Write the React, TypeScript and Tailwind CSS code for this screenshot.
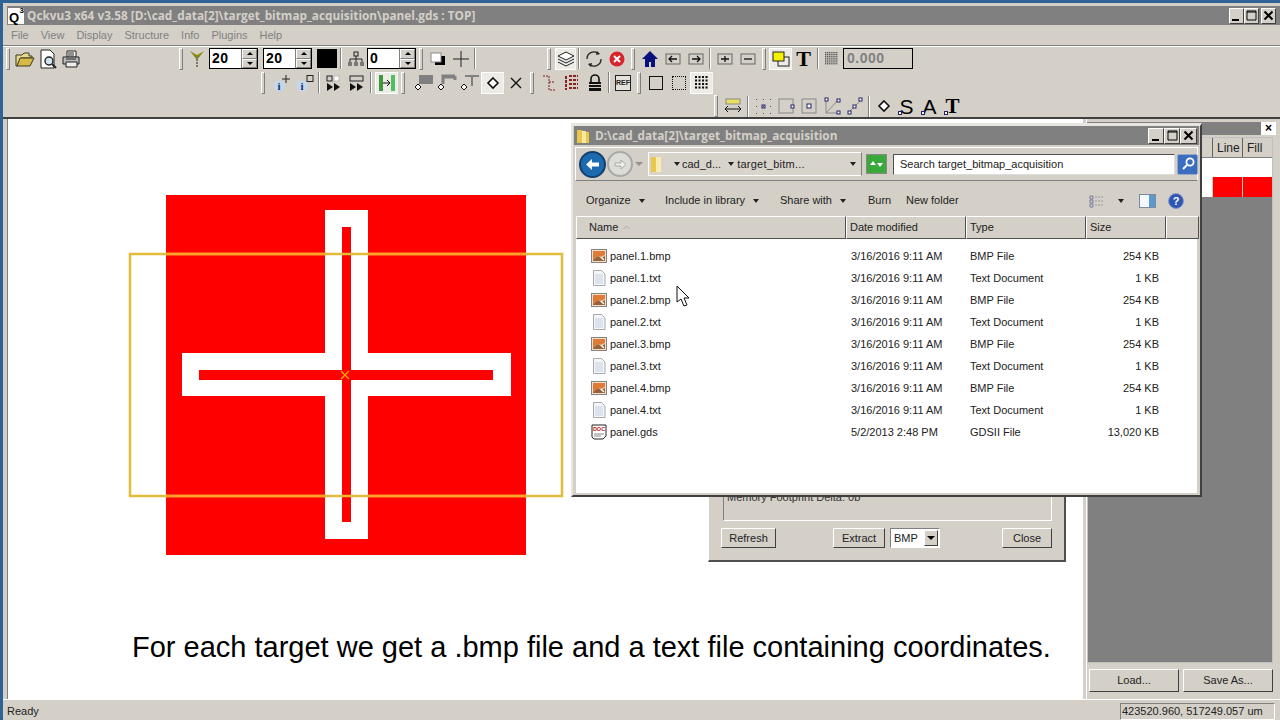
import React from "react";

const S = ({ w = 20, h = 20, children }: { w?: number; h?: number; children: React.ReactNode }) => (
  <svg width={w} height={h} viewBox={`0 0 ${w} ${h}`} className="block">{children}</svg>
);

const Grip = () => (
  <div className="h-[22px] w-[4px] shrink-0 border-l border-t border-white border-r border-b border-r-[#808080] border-b-[#808080] mx-[3px]" />
);
const Sep = () => <div className="h-[21px] w-[2px] shrink-0 border-l border-[#808080] bg-white mx-[2px]" />;
const B = ({ children, on = false, w = 23 }: { children?: React.ReactNode; on?: boolean; w?: number }) => (
  <div className={`h-[22px] shrink-0 flex items-center justify-center ${on ? "bg-[#ecebe6] border border-white border-r-[#f4f4f0]" : ""}`} style={{ width: w }}>{children}</div>
);
const Gap = ({ w }: { w: number }) => <div className="shrink-0" style={{ width: w }} />;

const Spin = ({ v, w = 49 }: { v: string; w?: number }) => (
  <div className="flex h-[21px] border border-black bg-white shrink-0" style={{ width: w }}>
    <div className="flex-1 pl-[2px] text-[14px] leading-[19px] font-bold text-black tracking-[0.5px]">{v}</div>
    <div className="w-[16px] flex flex-col bg-[#d4d0c8] border-l border-[#808080]">
      {[0, 1].map((i) => (
        <div key={i} className="flex-1 flex items-center justify-center border border-white border-r-[#808080] border-b-[#808080]">
          <div className={`w-0 h-0 border-l-[3px] border-r-[3px] border-transparent ${i === 0 ? "border-b-[3px] border-b-black" : "border-t-[3px] border-t-black"}`} />
        </div>
      ))}
    </div>
  </div>
);

const Folder = () => (
  <S w={20} h={18}><path d="M1 5h6l2-2h5v3h3v2H6L2 16H1z" fill="#e8d890" stroke="#3a3a20" /><path d="M5 8h14l-4 8H2z" fill="#d8b848" stroke="#3a3a20" /></S>
);
const Preview = () => (
  <S w={18} h={20}><path d="M2 1h9l4 4v14H2z" fill="#fff" stroke="#222" /><circle cx="10" cy="12" r="4" fill="#cfe4f0" stroke="#222" strokeWidth="1.4" /><path d="M13 15l4 4" stroke="#222" strokeWidth="2" /></S>
);
const Printer = () => (
  <S w={20} h={18}><path d="M6 1h9v6H6z" fill="#fff" stroke="#222" /><path d="M2 7h16v7H2z" fill="#bbb" stroke="#222" /><path d="M5 12h11v5H5z" fill="#eee" stroke="#222" /><path d="M5 9h10M7 3h6M7 5h6" stroke="#222" /></S>
);
const Funnel = () => (
  <S w={14} h={18}><path d="M0 1l7 9 7-9-7 4z" fill="#8a8a10" /><path d="M7 6v11" stroke="#776" strokeWidth="2" strokeDasharray="2 1" /></S>
);
const Tree = () => (
  <S w={16} h={16}><rect x="6" y="1" width="4" height="4" fill="none" stroke="#222" /><path d="M8 5v3M2 8h12M2 8v3M8 8v3M14 8v3" stroke="#222" fill="none" /><path d="M1 11v4M3 11v4M7 11v4M9 11v4M13 11v4M15 11v4" stroke="#222" /></S>
);
const Info = ({ plus = false }: { plus?: boolean }) => (
  <S w={20} h={18}>
    <circle cx="7" cy="12" r="5.5" fill="#c4d8ec" />
    <text x="7" y="16" textAnchor="middle" fontSize="11" fontWeight="bold" fill="#14306a" fontFamily="Liberation Serif, serif">i</text>
    {plus ? <path d="M14 1v8M10 5h8" stroke="#222" /> : <rect x="12" y="1.5" width="6" height="6" fill="none" stroke="#222" />}
  </S>
);
const Ff = ({ wide = false }: { wide?: boolean }) => (
  <S w={16} h={18}>
    {wide ? <rect x="1" y="2" width="13" height="5" fill="none" stroke="#222" /> : <><rect x="1" y="2" width="5" height="5" fill="none" stroke="#222" /><rect x="8" y="2" width="5" height="5" fill="#fff" stroke="#bbb" /></>}
    <path d="M1 9l6 4-6 4zM8 9l6 4-6 4z" fill="#111" />
  </S>
);
const Green = () => (
  <S w={18} h={18}><rect x="1" y="1" width="4" height="16" fill="#3f9a3f" /><rect x="13" y="1" width="4" height="16" fill="#4fbf5f" /><path d="M5 9h7M9 6l3 3-3 3" stroke="#111" fill="none" /></S>
);
const EditA = ({ k }: { k: number }) => (
  <S w={20} h={18}>
    {k === 0 && <rect x="5" y="1" width="14" height="9" fill="#808080" />}
    {k === 1 && <path d="M6 10V2h12M18 2v4M6 3h12" stroke="#808080" strokeWidth="3" fill="none" />}
    {k === 2 && <path d="M5 2h14M12 2v10" stroke="#808080" strokeWidth="2" fill="none" />}
    <path d="M4 10l3 3-3 3-3-3z" fill="#fff" stroke="#111" />
  </S>
);
const Diamond = ({ s = 5 }: { s?: number }) => (
  <S w={14} h={14}><path d={`M7 ${7 - s}L${7 + s} 7 7 ${7 + s} ${7 - s} 7z`} fill="#fff" stroke="#111" strokeWidth="1.6" /></S>
);
const Xx = () => <S w={12} h={12}><path d="M1 1l10 10M11 1L1 11" stroke="#111" strokeWidth="1.4" /></S>;
const Hier = ({ c, k }: { c: string; k: number }) => (
  <S w={16} h={18}>
    {k === 0 ? <path d="M2 2h6v14h6M8 8h6" stroke={c} fill="none" strokeDasharray="2 1" /> : <path d="M2 2v14M5 2h9M5 6h9M5 10h9M5 14h9" stroke={c} strokeWidth="2" strokeDasharray="3 1" fill="none" />}
  </S>
);
const Lock = () => (
  <S w={14} h={18}><path d="M3 8V5a4 4 0 018 0v3" fill="none" stroke="#111" strokeWidth="1.6" /><path d="M1 8h12v2H1zM1 11h12v2H1zM1 14h12v3H1z" fill="#111" /></S>
);
const Home = () => (
  <S w={18} h={18}><path d="M9 1L1 9h3v8h4v-5h2v5h4V9h3z" fill="#08107c" /></S>
);
const Boxed = ({ d }: { d: string }) => (
  <S w={16} h={12}><rect x="1" y="1" width="14" height="10" fill="none" stroke="#666" /><path d={d} stroke="#111" strokeWidth="1.3" fill="none" /></S>
);
const Dots = ({ n = 6, size = 14, c = "#111" }: { n?: number; size?: number; c?: string }) => {
  const step = size / n;
  const items = [];
  for (let i = 0; i < n; i++) for (let j = 0; j < n; j++) items.push(<rect key={`${i}${j}`} x={i * step} y={j * step} width={step / 2 + 0.3} height={step / 2 + 0.3} fill={c} />);
  return <S w={size} h={size}>{items}</S>;
};
const Pts = ({ k }: { k: number }) => (
  <S w={18} h={18}>
    {k === 0 && <>{[2, 9, 16].flatMap((x) => [2, 9, 16].map((y) => <rect key={`${x}${y}`} x={x} y={y} width="1" height="1" fill="#555" />))}<rect x="8" y="8" width="3" height="3" fill="none" stroke="#226" /></>}
    {k === 1 && <><rect x="2" y="2" width="14" height="14" fill="none" stroke="#888" /><rect x="14" y="8" width="3" height="3" fill="#fff" stroke="#226" /></>}
    {k === 2 && <><rect x="2" y="2" width="14" height="14" fill="none" stroke="#888" /><rect x="7" y="7" width="4" height="4" fill="#fff" stroke="#226" /></>}
    {k === 3 && <path d="M3 2v14l13 0M3 16L15 3" stroke="#888" fill="none" />}
    {k === 3 && <><rect x="2" y="1" width="3" height="3" fill="#fff" stroke="#226" /><rect x="14" y="2" width="3" height="3" fill="#fff" stroke="#226" /><rect x="14" y="14" width="3" height="3" fill="#fff" stroke="#226" /></>}
    {k === 4 && <><path d="M3 15L15 3" stroke="#888" /><rect x="13" y="1" width="3" height="3" fill="#fff" stroke="#226" /><rect x="7" y="8" width="3" height="3" fill="#fff" stroke="#226" /><rect x="2" y="14" width="3" height="3" fill="#fff" stroke="#226" /></>}
  </S>
);
const Glyph = ({ t, serif = false }: { t: string; serif?: boolean }) => (
  <div className={`relative w-[20px] h-[20px] flex items-center justify-center text-[21px] leading-none text-black ${serif ? "font-['Liberation_Serif',serif] font-bold" : "font-['Liberation_Sans',sans-serif]"}`}>
    {t}
    <div className="absolute left-[1px] bottom-[1px] w-[4px] h-[4px] border border-[#226] bg-white" />
  </div>
);

const Bmp = () => (
  <S w={16} h={16}><rect x="0.5" y="1.5" width="15" height="13" fill="#f0e0d0" stroke="#8a8078" /><path d="M2 3h12v4l-4 2-3-1-5 4z" fill="#e07a38" /><path d="M2 12l5-4 3 2 4-2v5H2z" fill="#9a6038" /><path d="M10 9l3 3" stroke="#fff" strokeWidth="1.5" /></S>
);
const Txt = () => (
  <S w={16} h={16}><path d="M2.5 0.5h8l3.5 3.5v11.5H2.5z" fill="#f4f6fa" stroke="#a8a8a8" /><path d="M4 5h8M4 7h8M4 9h8M4 11h8M4 13h8" stroke="#c6d0e0" /></S>
);
const Doc = () => (
  <S w={16} h={16}><path d="M1 1h14v11l-3 3H3l-2-2z" fill="#fff" stroke="#222" /><text x="8" y="7" textAnchor="middle" fontSize="5.5" fontWeight="bold" fill="#b02020" fontFamily="Liberation Sans, sans-serif">DOC</text><path d="M3 10h10M3 12h7" stroke="#888" /></S>
);

const files: [string, string, string, string, string][] = [
  ["bmp", "panel.1.bmp", "3/16/2016 9:11 AM", "BMP File", "254 KB"],
  ["txt", "panel.1.txt", "3/16/2016 9:11 AM", "Text Document", "1 KB"],
  ["bmp", "panel.2.bmp", "3/16/2016 9:11 AM", "BMP File", "254 KB"],
  ["txt", "panel.2.txt", "3/16/2016 9:11 AM", "Text Document", "1 KB"],
  ["bmp", "panel.3.bmp", "3/16/2016 9:11 AM", "BMP File", "254 KB"],
  ["txt", "panel.3.txt", "3/16/2016 9:11 AM", "Text Document", "1 KB"],
  ["bmp", "panel.4.bmp", "3/16/2016 9:11 AM", "BMP File", "254 KB"],
  ["txt", "panel.4.txt", "3/16/2016 9:11 AM", "Text Document", "1 KB"],
  ["doc", "panel.gds", "5/2/2013 2:48 PM", "GDSII File", "13,020 KB"],
];

const WinBtn = ({ k, w = 17 }: { k: number; w?: number }) => (
  <div className="h-[16px] flex items-center justify-center bg-[#d4d0c8] border border-white border-r-[#404040] border-b-[#404040]" style={{ width: w }}>
    <S w={11} h={11}>
      {k === 0 && <path d="M1 9h7v2H1z" fill="#000" />}
      {k === 1 && <path d="M1 1h9v9H1zM1 2h9" fill="none" stroke="#000" />}
      {k === 2 && <path d="M1.5 1.5l8 8M9.5 1.5l-8 8" stroke="#000" strokeWidth="2" />}
    </S>
  </div>
);

const Btn = ({ t, w, h = 20 }: { t: string; w: number; h?: number }) => (
  <div className="flex items-center justify-center bg-[#d4d0c8] border border-white border-r-[#404040] border-b-[#404040] text-[11px] text-[#222] shrink-0" style={{ width: w, height: h }}>{t}</div>
);

const Caret = () => <div className="w-0 h-0 border-l-[3.5px] border-r-[3.5px] border-t-[4px] border-transparent border-t-[#222]" />;

const Cmd = ({ t, w, caret = true }: { t: string; w: number; caret?: boolean }) => (
  <div className="flex items-center shrink-0 gap-[8px]" style={{ width: w }}>
    <span>{t}</span>
    {caret && <Caret />}
  </div>
);

const Hdr = ({ t, w }: { t: string; w: number }) => (
  <div className="h-[23px] flex items-center pl-[3px] border-l border-t border-white border-r border-b border-r-[#505050] border-b-[#505050] shrink-0" style={{ width: w }}>{t}</div>
);

export default function App() {
  return (
    <div className="relative w-[1280px] h-[720px] overflow-hidden bg-[#d4d0c8] flex flex-col font-['Liberation_Sans',sans-serif] text-[11px] text-[#222] border-l-[3px] border-t-[3px] border-[#2f6396]">
      {/* Title */}
      <div className="mt-[3px] ml-[4px] h-[19px] shrink-0 flex items-center bg-[#808080]">
        <div className="ml-[1px] w-[16px] h-[16px] bg-white flex items-end justify-start shrink-0 relative">
          <span className="text-[13px] leading-[13px] font-bold text-black pl-[1px]">Q</span>
          <span className="absolute right-0 top-[-1px] text-[8px] leading-[8px] font-bold text-black">3</span>
        </div>
        <span className="ml-[3px] font-['Open_Sans',sans-serif] font-bold text-[11.8px] text-[#d4d0c8] whitespace-nowrap">Qckvu3 x64 v3.58 [D:\cad_data[2]\target_bitmap_acquisition\panel.gds : TOP]</span>
        <div className="ml-auto mr-[4px] flex">
          <WinBtn k={0} w={15} /><WinBtn k={1} w={15} /><div className="w-[2px]" /><WinBtn k={2} w={15} />
        </div>
      </div>
      {/* Menu */}
      <div className="h-[21px] shrink-0 flex items-center pl-[8px] gap-[12px] text-[#808080] text-[11px] border-b border-[#808080]">
        {["File", "View", "Display", "Structure", "Info", "Plugins", "Help"].map((m) => <span key={m}>{m}</span>)}
      </div>
      {/* Toolbar rows */}
      <div className="h-[24px] shrink-0 flex items-center border-t border-white">
        <Grip />
        <B><Folder /></B><B><Preview /></B><B><Printer /></B>
        <Gap w={94} />
        <Grip />
        <Gap w={1} />
        <B w={20}><Funnel /></B>
        <Gap w={2} />
        <Spin v="20" /><Gap w={5} /><Spin v="20" /><Gap w={5} />
        <div className="w-[20px] h-[19px] bg-black shrink-0" />
        <Gap w={1} /><Sep /><Gap w={1} />
        <B w={22}><Tree /></B>
        <Spin v="0" />
        <Grip />
        <B>
          <S w={16} h={14}><rect x="5" y="4" width="10" height="9" fill="#000" /><rect x="1" y="1" width="10" height="9" fill="#fff" stroke="#888" /></S>
        </B>
        <B><S w={18} h={18}><path d="M9 1v16M1 9h16" stroke="#222" /></S></B>
        <Sep />
        <Gap w={66} />
        <Grip />
        <Gap w={1} />
        <B on w={21}>
          <S w={18} h={18}><path d="M9 2l8 4-8 4-8-4z" fill="#fff" stroke="#222" /><path d="M1 9l8 4 8-4M1 12l8 4 8-4" fill="none" stroke="#222" /></S>
        </B>
        <Sep />
        <B><S w={18} h={18}><path d="M2 9a7 7 0 0112-5M16 9a7 7 0 01-12 5" fill="none" stroke="#222" strokeWidth="1.3" /><path d="M12 1l3 3-4 1zM6 17l-3-3 4-1z" fill="#222" /></S></B>
        <B><S w={16} h={16}><circle cx="8" cy="8" r="7.5" fill="#d8242c" /><path d="M5 5l6 6M11 5l-6 6" stroke="#fff" strokeWidth="2" /></S></B>
        <Grip />
        <B><Home /></B>
        <B><Boxed d="M12 6H4M7 3L4 6l3 3" /></B>
        <B><Boxed d="M4 6h8M9 3l3 3-3 3" /></B>
        <Sep />
        <B><Boxed d="M4 6h8M8 3v6" /></B>
        <B><Boxed d="M4 6h8" /></B>
        <Grip />
        <B on><S w={18} h={16}><rect x="6" y="6" width="11" height="9" fill="none" stroke="#222" /><rect x="1" y="1" width="11" height="9" fill="#f4f000" stroke="#222" /></S></B>
        <B><span className="font-['Liberation_Serif',serif] font-bold text-[22px] leading-none text-black">T</span></B>
        <Sep />
        <B w={20}><Dots n={7} size={13} c="#555" /></B>
        <Gap w={2} />
        <div className="w-[70px] h-[21px] border border-black text-[14px] font-bold text-[#808080] pl-[3px] leading-[19px] shrink-0 tracking-[0.5px]">0.000</div>
      </div>
      <div className="h-[25px] shrink-0 flex items-center pl-[255px]">
        <Grip /><Gap w={2} />
        <B><Info plus /></B><B><Info /></B><Sep /><B><Ff /></B><B><Ff wide /></B><Sep />
        <Gap w={1} />
        <B on><Green /></B>
        <Grip /><Gap w={4} />
        <B><EditA k={0} /></B><B><EditA k={1} /></B><B><EditA k={2} /></B>
        <B on><Diamond /></B>
        <B><Xx /></B>
        <Grip />
        <B><Hier c="#7a1c1c" k={0} /></B><B><Hier c="#8a2222" k={1} /></B><B><Lock /></B><Sep />
        <B w={22}><div className="w-[16px] h-[16px] border border-[#222] text-[7px] leading-[14px] font-bold text-center bg-[#e4e2dc]">REF</div></B>
        <Grip />
        <B><div className="w-[14px] h-[14px] border-[1.5px] border-[#111]" /></B>
        <B><div className="w-[14px] h-[14px] border-[1.5px] border-dotted border-[#111]" /></B>
        <B on><Dots n={4} size={14} /></B>
      </div>
      <div className="h-[24px] shrink-0 flex items-center pl-[708px] border-b-2 border-[#404040]">
        <Grip />
        <B w={24}><S w={18} h={16}><rect x="2" y="1" width="14" height="5" fill="#e8e060" stroke="#888" /><path d="M1 11h16M1 11l3-3M1 11l3 3M17 11l-3-3M17 11l-3 3" stroke="#111" fill="none" /></S></B>
        <Sep />
        <B><Pts k={0} /></B><B><Pts k={1} /></B><B><Pts k={2} /></B><B><Pts k={3} /></B><B><Pts k={4} /></B>
        <Sep />
        <B><Diamond s={5} /></B>
        <B><Glyph t="S" /></B><B><Glyph t="A" /></B><B><Glyph t="T" serif /></B>
      </div>

      {/* Body */}
      <div className="flex-1 flex min-h-0 pl-[4px]">
        <div className="relative w-[1076px] bg-white shrink-0 border-l border-[#808080]">
          <svg width="1075" height="580" viewBox="8 119 1075 580" className="block">
            <rect x="166" y="195" width="360" height="360" fill="#ff0000" />
            <rect x="325" y="210" width="43" height="329" fill="#fff" />
            <rect x="182" y="353" width="329" height="43" fill="#fff" />
            <rect x="342" y="227" width="9" height="295" fill="#ff0000" />
            <rect x="199" y="370" width="294" height="10" fill="#ff0000" />
            <rect x="130" y="254" width="432" height="242" fill="none" stroke="#e4bc3c" strokeWidth="2.5" />
            <path d="M166 254h160M368 254h158M166 496h160M368 496h158" fill="none" stroke="#ffa32a" strokeWidth="2.5" />
            <path d="M341 371l8 8M349 371l-8 8" stroke="#f5b000" strokeWidth="1.2" />
          </svg>
        </div>
        <div className="flex-1 ml-[3px] border-l border-white flex flex-col min-w-0 pt-[3px]">
          <div className="h-[13px] bg-[#808080] mr-[18px] shrink-0" />
          <div className="h-[526px] mr-[7px] mt-[2px] bg-[#808080] flex flex-col shrink-0 border border-[#c0c0c0]" />
          <div className="flex gap-[4px] pt-[6px] pl-[2px]">
            <Btn t="Load..." w={90} h={23} />
            <Btn t="Save As..." w={90} h={23} />
          </div>
        </div>
      </div>

      {/* Status */}
      <div className="h-[21px] shrink-0 flex items-center border-t border-white pl-[4px] pt-[2px] text-[11px] relative">
        <span>Ready</span>
        <div className="ml-auto mr-[5px] w-[155px] h-[17px] border border-[#808080] border-r-white border-b-white pl-[1px] leading-[15px] text-[11px] whitespace-nowrap">423520.960, 517249.057 um</div>
      </div>

      {/* Caption */}
      <div className="absolute left-[129px] top-[627px] text-[29px] leading-[34px] text-black whitespace-nowrap font-['Liberation_Sans',sans-serif]">For each target we get a .bmp file and a text file containing coordinates.</div>

      {/* Right panel header overlay */}
      <div className="absolute left-[1198px] top-[135px] w-[71px] h-[20px] flex bg-[#d4d0c8] border-b border-[#808080]">
        <div className="flex-1" />
        <div className="w-[30px] border-l border-[#606060] pl-[4px] leading-[20px] text-[12px]">Line</div>
        <div className="w-[30px] border-l border-[#606060] pl-[4px] leading-[20px] text-[12px]">Fill</div>
      </div>
      <div className="absolute left-[1198px] top-[155px] w-[71px] h-[19px] bg-white" />
      <div className="absolute left-[1198px] top-[174px] w-[71px] h-[20px] flex bg-white">
        <div className="flex-1" />
        <div className="w-[30px] bg-[#ff0000] border-l border-[#d4d0c8]" />
        <div className="w-[30px] bg-[#ff0000] border-l border-[#d4d0c8]" />
      </div>
      <div className="absolute left-[1258px] top-[119px] w-[15px] h-[13px] bg-white text-black text-[12px] font-bold leading-[12px] text-center">×</div>

      {/* Dialog behind */}
      <div className="absolute left-[705px] top-[395px] w-[358px] h-[164px] bg-[#d4d0c8] border-r-2 border-b-2 border-[#505050] border-l border-l-white">
        <div className="absolute left-[14px] right-[12px] top-[90px] h-[33px] border border-[#808080] border-r-white border-b-white pl-[3px] text-[11px] text-[#333]">Memory Footprint Delta: 0b</div>
        <div className="absolute left-[12px] right-[12px] top-[130px] flex items-center">
          <Btn t="Refresh" w={55} />
          <Gap w={57} />
          <Btn t="Extract" w={52} />
          <Gap w={5} />
          <div className="w-[50px] h-[20px] bg-white border border-[#808080] border-r-white border-b-white flex items-center pl-[3px] text-[11px] shrink-0">
            BMP
            <div className="ml-auto mr-[1px] w-[14px] h-[16px] bg-[#d4d0c8] border border-white border-r-[#404040] border-b-[#404040] flex items-center justify-center"><div className="w-0 h-0 border-l-[4px] border-r-[4px] border-t-[4px] border-transparent border-t-black" /></div>
          </div>
          <div className="ml-auto"><Btn t="Close" w={50} /></div>
        </div>
      </div>

      {/* Explorer window */}
      <div className="absolute left-[568px] top-[120px] w-[631px] h-[374px] bg-[#d4d0c8] border-2 border-t-[3px] border-[#e8e6e0] border-r-[#404040] border-b-[#404040] flex flex-col text-[11px] text-[#222]">
        <div className="h-[19px] mx-[1px] bg-[#808080] flex items-center shrink-0">
          <div className="w-[14px] h-[16px] ml-[3px] shrink-0"><S w={14} h={16}><path d="M0 2h5l1 2h6v11H0z" fill="#e8c84c" /><path d="M5 3h4v12H5z" fill="#f8e8a0" /></S></div>
          <span className="ml-[4px] font-['Open_Sans',sans-serif] font-bold text-[11.8px] text-[#d4d0c8] whitespace-nowrap">D:\cad_data[2]\target_bitmap_acquisition</span>
          <div className="ml-auto flex mr-[2px]"><WinBtn k={0} w={16} /><WinBtn k={1} w={16} /><WinBtn k={2} w={17} /></div>
        </div>
        <div className="mt-[2px] mx-[2px] h-[34px] border border-white border-b-[#808080] flex items-center shrink-0 pl-[3px]">
          <div className="w-[27px] h-[27px] rounded-full bg-[#1c6ab0] border-2 border-[#15406e] flex items-center justify-center shrink-0"><S w={15} h={13}><path d="M1 6.5L7 1v3.5h7v4H7V12z" fill="#fff" /></S></div>
          <div className="w-[26px] h-[26px] rounded-full bg-[#dcdcd8] border-2 border-[#a8a8a4] ml-[1px] shrink-0 flex items-center justify-center"><S w={13} h={11}><path d="M12 5.5L7 1v3H1v3h6v3z" fill="#f0f0ec" stroke="#a8a8a4" /></S></div>
          <div className="w-0 h-0 border-l-[4px] border-r-[4px] border-t-[4px] border-transparent border-t-[#909090] ml-[2px] shrink-0" />
          <div className="w-[214px] h-[24px] ml-[5px] bg-[#d8d4cc] border border-white border-r-[#808080] flex items-center shrink-0">
            <S w={18} h={18}><path d="M2 2h6v15H2z" fill="#e8c84c" /><path d="M7 2h5v15H7z" fill="#f8ecb0" /></S>
            <div className="ml-[7px]"><Caret /></div><span className="ml-[2px]">cad_d...</span>
            <div className="ml-[7px]"><Caret /></div><span className="ml-[3px] tracking-[0.25px]">target_bitm...</span>
            <div className="ml-auto mr-[5px]"><Caret /></div>
          </div>
          <div className="w-[21px] h-[20px] ml-[4px] bg-[#3aa83a] border border-[#888] flex items-center justify-center shrink-0"><S w={15} h={10}><path d="M1 6l3-4 3 4zM8 4l3 4 3-4z" fill="#fff" /></S></div>
          <div className="w-[282px] h-[21px] ml-[6px] bg-white border border-[#505050] border-r-[#ddd] border-b-[#ddd] flex items-center pl-[6px] shrink-0">Search target_bitmap_acquisition</div>
          <div className="w-[21px] h-[21px] ml-[2px] bg-[#3a6cc0] border border-[#98a8c8] rounded-[2px] flex items-center justify-center shrink-0"><S w={14} h={14}><circle cx="9" cy="5" r="3.6" fill="none" stroke="#fff" strokeWidth="1.8" /><path d="M6 8l-4 4" stroke="#fff" strokeWidth="2" /></S></div>
        </div>
        <div className="h-[35px] flex items-center pl-[13px] pr-[16px] pt-[4px] shrink-0">
          <Cmd t="Organize" w={79} />
          <Cmd t="Include in library" w={115} />
          <Cmd t="Share with" w={88} />
          <Cmd t="Burn" w={38} caret={false} />
          <Cmd t="New folder" w={60} caret={false} />
          <div className="ml-auto flex items-center gap-[9px]">
            <S w={16} h={14}><path d="M1 2h3v3H1zM1 6h3v3H1zM1 10h3v3H1z" fill="none" stroke="#7a7aa0" /><path d="M6 3h9M6 7h9M6 11h9" stroke="#999" strokeDasharray="2 1" /></S>
            <div className="ml-[4px]"><Caret /></div>
            <div className="ml-[6px]"><S w={17} h={14}><rect x="0.5" y="0.5" width="16" height="13" fill="#f4f8fc" stroke="#7a8aa0" /><rect x="10" y="1" width="6" height="12" fill="#5a9acc" /></S></div>
            <div className="ml-[3px] w-[16px] h-[16px] rounded-full bg-[#2f56b0] border border-[#8a9ad0] text-white text-[11px] font-bold leading-[14px] text-center">?</div>
          </div>
        </div>
        <div className="flex ml-[3px] mr-[1px] shrink-0">
          <Hdr t="" w={270} /><Hdr t="Date modified" w={120} /><Hdr t="Type" w={120} /><Hdr t="Size" w={80} /><Hdr t="" w={33} />
        </div>
        <div className="relative flex-1 bg-white mx-[3px] mb-[2px] pt-[6px] min-h-0">
          <div className="absolute left-[13px] top-[-20px] flex items-center gap-[5px]"><span>Name</span><S w={7} h={5}><path d="M0.5 4L3.5 1 6.5 4" fill="none" stroke="#aaa" /></S></div>
          {files.map(([k, n, d, t, s]) => (
            <div key={n} className="flex items-center h-[22px]">
              <div className="w-[16px] ml-[15px] shrink-0">{k === "bmp" ? <Bmp /> : k === "txt" ? <Txt /> : <Doc />}</div>
              <div className="ml-[3px] w-[241px] shrink-0">{n}</div>
              <div className="w-[119px] shrink-0">{d}</div>
              <div className="w-[90px] shrink-0">{t}</div>
              <div className="w-[99px] text-right shrink-0">{s}</div>
            </div>
          ))}
          {/* Cursor */}
          <div className="absolute left-[100px] top-[46px]">
            <S w={14} h={22}><path d="M1 1v16l4-3 3 7 3-1-3-7h5z" fill="#fff" stroke="#111" /></S>
          </div>
        </div>
      </div>
    </div>
  );
}
